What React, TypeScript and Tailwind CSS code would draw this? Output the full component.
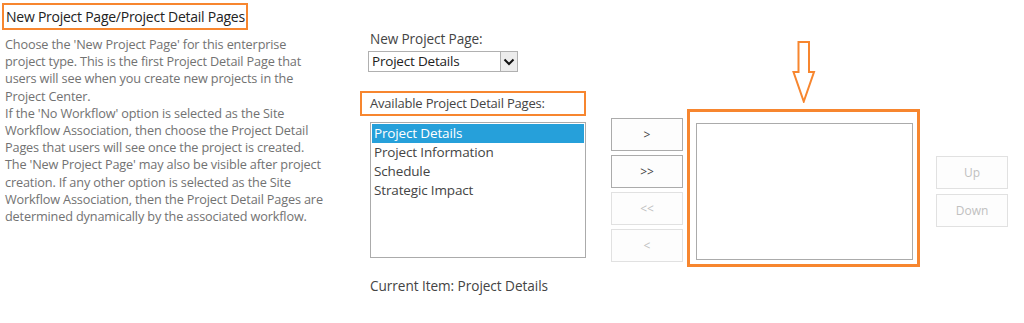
import React from "react";

const font = { fontFamily: '"Open Sans", "Noto Sans", sans-serif' };

const descLines = [
  "Choose the 'New Project Page' for this enterprise",
  "project type. This is the first Project Detail Page that",
  "users will see when you create new projects in the",
  "Project Center.",
  "If the 'No Workflow' option is selected as the Site",
  "Workflow Association, then choose the Project Detail",
  "Pages that users will see once the project is created.",
  "The 'New Project Page' may also be visible after project",
  "creation. If any other option is selected as the Site",
  "Workflow Association, then the Project Detail Pages are",
  "determined dynamically by the associated workflow.",
];

function MoveButton({ label, enabled }: { label: string; enabled: boolean }) {
  return (
    <div
      className={`w-[72px] h-[33px] flex items-center justify-center text-[12px] border ${
        enabled ? "border-[#ababab] bg-[#fdfdfd] text-[#444]" : "border-[#e1e1e1] bg-[#fdfdfd] text-[#c0c0c0]"
      }`}
    >
      {label}
    </div>
  );
}

export default function App() {
  return (
    <div className="w-[1024px] h-[323px] bg-white overflow-hidden flex" style={font}>
      {/* Left column */}
      <div className="w-[360px] shrink-0 pt-[3px] pl-[2px]">
        <div className="w-[246px] h-[27px] border-2 border-[#f7862f] flex items-center pl-[2px] text-[14px] text-[#222] whitespace-nowrap tracking-[-0.25px]">
          New Project Page/Project Detail Pages
        </div>
        <div className="mt-[6px] pl-[3px] text-[12.7px] leading-[17.2px] text-[#727272] whitespace-nowrap tracking-[-0.15px]">
          {descLines.map((l, i) => (
            <div key={i}>{l}</div>
          ))}
        </div>
      </div>

      {/* Middle column */}
      <div className="w-[251px] shrink-0 pt-[30px]">
        <div className="pl-[10px] text-[13.6px] text-[#444] leading-[18px] tracking-[-0.1px]">New Project Page:</div>
        <div className="ml-[8px] mt-[3px] w-[150px] h-[21px] border border-[#b0b0b0] flex">
          <div className="flex-1 pl-[3px] text-[13.5px] text-[#222] leading-[19px] tracking-[-0.2px]">Project Details</div>
          <div className="w-[17px] h-[19px] border-l border-[#b0b0b0] bg-[#ececec] flex items-center justify-center">
            <svg width="12" height="8" viewBox="0 0 12 8">
              <path d="M1.5 1.5 L6 6 L10.5 1.5" fill="none" stroke="#111" strokeWidth="2" />
            </svg>
          </div>
        </div>
        <div className="mt-[19px] w-[226px] h-[25px] border-2 border-[#f7862f] flex items-center pl-[8px] text-[13px] text-[#444] tracking-[-0.2px]">
          Available Project Detail Pages:
        </div>
        <div className="ml-[10px] mt-[6px] w-[216px] h-[136px] border border-[#ababab] p-[1px] text-[13.5px] text-[#444] leading-[19px] tracking-[-0.15px]">
          <div className="bg-[#26a0da] text-white pl-[2px] h-[19px]">Project Details</div>
          <div className="pl-[2px]">Project Information</div>
          <div className="pl-[2px]">Schedule</div>
          <div className="pl-[2px]">Strategic Impact</div>
        </div>
        <div className="pl-[10px] mt-[18px] text-[13.6px] text-[#444] tracking-[-0.05px]">Current Item: Project Details</div>
      </div>

      {/* Move buttons */}
      <div className="w-[76px] shrink-0 pt-[118px] flex flex-col gap-[4px]">
        <MoveButton label=">" enabled />
        <MoveButton label=">>" enabled />
        <MoveButton label="<<" enabled={false} />
        <MoveButton label="<" enabled={false} />
      </div>

      {/* Selected list with arrow */}
      <div className="w-[249px] shrink-0 flex flex-col">
        <div className="h-[109px] flex justify-start pl-[105px] pt-[41px]">
          <svg width="24" height="62" viewBox="0 0 24 62">
            <path
              d="M6.5 1 H17 V31 H22 L11.75 60.5 L1.5 31 H6.5 Z"
              fill="none"
              stroke="#f7862f"
              strokeWidth="2"
              strokeLinejoin="miter"
            />
          </svg>
        </div>
        <div className="w-[233px] h-[158px] border-[3px] border-[#f7862f] pt-[11px] pl-[6px]">
          <div className="w-[217px] h-[137px] border border-[#ababab] bg-white" />
        </div>
      </div>

      {/* Up / Down */}
      <div className="pt-[156px] flex flex-col gap-[5px]">
        <MoveButton label="Up" enabled={false} />
        <MoveButton label="Down" enabled={false} />
      </div>
    </div>
  );
}
